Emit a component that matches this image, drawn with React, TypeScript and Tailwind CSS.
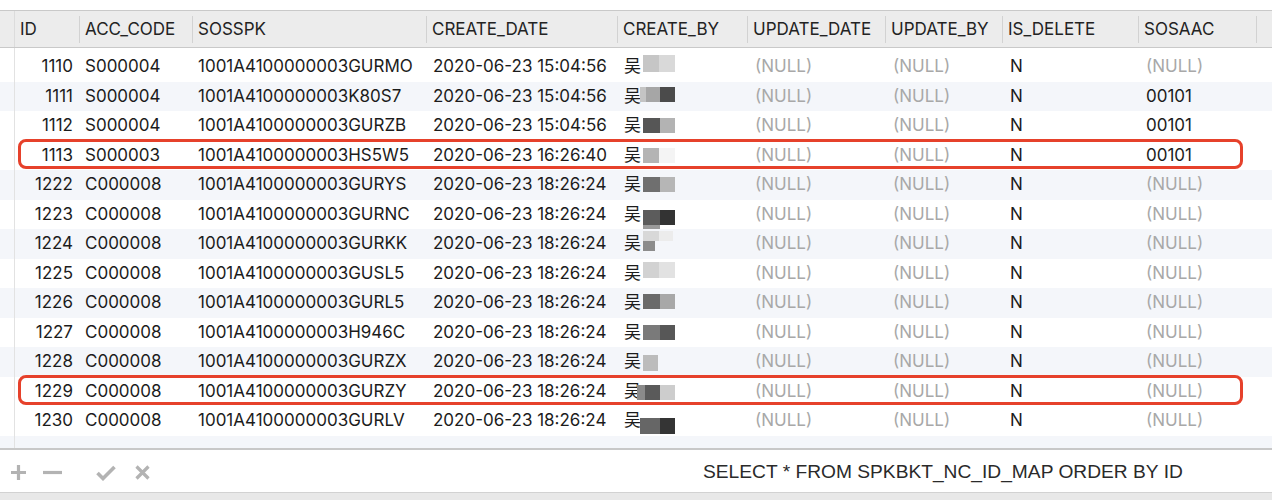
import React from "react";

type Block = { x: number; y: number; w: number; h: number; c: string };

interface Row {
  id: number;
  acc: string;
  pk: string;
  date: string;
  sosaac: string | null;
  shaded?: boolean;
  marked?: boolean;
  blur: Block[];
}

const COLS =
  "grid grid-cols-[15px_65px_113px_234px_191px_130px_138px_117px_136px_118px_1fr]";

const HEADERS = [
  "ID",
  "ACC_CODE",
  "SOSSPK",
  "CREATE_DATE",
  "CREATE_BY",
  "UPDATE_DATE",
  "UPDATE_BY",
  "IS_DELETE",
  "SOSAAC",
];

// redacted name pixels, positioned relative to the cell after 吴
const ROWS: Row[] = [
  { id: 1110, acc: "S000004", pk: "1001A4100000003GURMO", date: "2020-06-23 15:04:56", sosaac: null,
    blur: [{ x: 25, y: 3, w: 16, h: 17, c: "#c6c6c6" }, { x: 41, y: 3, w: 16, h: 17, c: "#d9d9d9" }] },
  { id: 1111, acc: "S000004", pk: "1001A4100000003K80S7", date: "2020-06-23 15:04:56", sosaac: "00101", shaded: true,
    blur: [{ x: 22, y: 5, w: 6, h: 15, c: "#c4c4c4" }, { x: 28, y: 5, w: 14, h: 15, c: "#a6a6a6" }, { x: 42, y: 5, w: 15, h: 15, c: "#4b4b4b" }] },
  { id: 1112, acc: "S000004", pk: "1001A4100000003GURZB", date: "2020-06-23 15:04:56", sosaac: "00101",
    blur: [{ x: 25, y: 7, w: 17, h: 15, c: "#565656" }, { x: 42, y: 7, w: 15, h: 15, c: "#b3b3b3" }] },
  { id: 1113, acc: "S000003", pk: "1001A4100000003HS5W5", date: "2020-06-23 16:26:40", sosaac: "00101", marked: true,
    blur: [{ x: 25, y: 7, w: 16, h: 15, c: "#b4b4b4" }, { x: 41, y: 7, w: 16, h: 15, c: "#f4f4f4" }] },
  { id: 1222, acc: "C000008", pk: "1001A4100000003GURYS", date: "2020-06-23 18:26:24", sosaac: null, shaded: true,
    blur: [{ x: 25, y: 7, w: 17, h: 15, c: "#6f6f6f" }, { x: 42, y: 7, w: 15, h: 15, c: "#b6b6b6" }] },
  { id: 1223, acc: "C000008", pk: "1001A4100000003GURNC", date: "2020-06-23 18:26:24", sosaac: null,
    blur: [{ x: 25, y: 10, w: 17, h: 15, c: "#5c5c5c" }, { x: 42, y: 10, w: 15, h: 15, c: "#333333" }, { x: 25, y: 25, w: 17, h: 4, c: "#9a9a9a" }] },
  { id: 1224, acc: "C000008", pk: "1001A4100000003GURKK", date: "2020-06-23 18:26:24", sosaac: null, shaded: true,
    blur: [{ x: 25, y: 2, w: 16, h: 10, c: "#d8d8d8" }, { x: 41, y: 2, w: 14, h: 10, c: "#ececec" }, { x: 25, y: 12, w: 12, h: 10, c: "#8c8c8c" }] },
  { id: 1225, acc: "C000008", pk: "1001A4100000003GUSL5", date: "2020-06-23 18:26:24", sosaac: null,
    blur: [{ x: 25, y: 3, w: 16, h: 16, c: "#d2d2d2" }, { x: 41, y: 3, w: 16, h: 16, c: "#e2e2e2" }] },
  { id: 1226, acc: "C000008", pk: "1001A4100000003GURL5", date: "2020-06-23 18:26:24", sosaac: null, shaded: true,
    blur: [{ x: 25, y: 6, w: 17, h: 15, c: "#6a6a6a" }, { x: 42, y: 6, w: 15, h: 15, c: "#a8a8a8" }] },
  { id: 1227, acc: "C000008", pk: "1001A4100000003H946C", date: "2020-06-23 18:26:24", sosaac: null,
    blur: [{ x: 25, y: 7, w: 17, h: 15, c: "#7a7a7a" }, { x: 42, y: 7, w: 15, h: 15, c: "#575757" }] },
  { id: 1228, acc: "C000008", pk: "1001A4100000003GURZX", date: "2020-06-23 18:26:24", sosaac: null, shaded: true,
    blur: [{ x: 25, y: 8, w: 15, h: 16, c: "#bcbcbc" }] },
  { id: 1229, acc: "C000008", pk: "1001A4100000003GURZY", date: "2020-06-23 18:26:24", sosaac: null, marked: true,
    blur: [{ x: 19, y: 8, w: 8, h: 15, c: "#8a8a8a" }, { x: 27, y: 8, w: 15, h: 15, c: "#5a5a5a" }, { x: 42, y: 8, w: 15, h: 15, c: "#cdcdcd" }] },
  { id: 1230, acc: "C000008", pk: "1001A4100000003GURLV", date: "2020-06-23 18:26:24", sosaac: null,
    blur: [{ x: 22, y: 12, w: 20, h: 16, c: "#666666" }, { x: 42, y: 12, w: 15, h: 16, c: "#343434" }] },
];

function Null() {
  return <span className="text-[#a8a8a8]">(NULL)</span>;
}

function TableRow({ row }: { row: Row }) {
  return (
    <div
      className={`${COLS} relative h-[29.5px] items-center text-[17px] text-[#1c1c1c] ${
        row.shaded ? "bg-[#f4f6fa]" : "bg-white"
      }`}
    >
      <div className="h-full border-r border-[#e2e2e2]" />
      <div className="pr-[7px] text-right">{row.id}</div>
      <div className="pl-[5px]">{row.acc}</div>
      <div className="pl-[5px]">{row.pk}</div>
      <div className="pl-[6px]">{row.date}</div>
      <div className="relative h-full pl-[6px] leading-[29.5px]">
        吴
        {row.blur.map((b, i) => (
          <span
            key={i}
            className="absolute"
            style={{ left: b.x, top: b.y, width: b.w, height: b.h, background: b.c }}
          />
        ))}
      </div>
      <div className="pl-[7px]">
        <Null />
      </div>
      <div className="pl-[7px]">
        <Null />
      </div>
      <div className="pl-[7px]">N</div>
      <div className="pl-[7px]">{row.sosaac ? row.sosaac : <Null />}</div>
      <div />
      {row.marked && (
        <div className="pointer-events-none absolute left-[18px] top-[-2px] h-[30px] w-[1225px] rounded-[8px] border-[3px] border-[#e6412b]" />
      )}
    </div>
  );
}

export default function App() {
  return (
    <div className="h-[500px] w-[1272px] overflow-hidden bg-white font-['Inter','Noto_Sans_CJK_SC',sans-serif]">
      <div className="h-[10px] bg-white" />

      {/* header */}
      <div
        className={`${COLS} h-[38px] items-center border-y border-[#c9c9c9] bg-[#ececec] text-[17px] text-[#232323]`}
      >
        <div className="h-full border-r border-[#dcdcdc]" />
        {HEADERS.map((h) => (
          <div key={h} className="flex h-[27px] items-center border-r border-[#d2d2d2] pl-[5px] pt-[1px]">
            {h}
          </div>
        ))}
        <div />
      </div>

      {/* body */}
      <div className="relative">
        <div className={`${COLS} h-[4px]`}>
          <div className="border-r border-[#e2e2e2]" />
        </div>
        {ROWS.map((r) => (
          <TableRow key={r.id} row={r} />
        ))}
        <div className={`${COLS} h-[12px] bg-[#f4f6fa]`}>
          <div className="border-r border-[#e2e2e2]" />
        </div>
      </div>

      {/* toolbar */}
      <div className="flex h-[44px] items-center border-t-2 border-[#c8c8c8] bg-white pt-[3px]">
        <div className="flex items-center pl-[10px] text-[#b3b3b3]">
          <svg width="17" height="17" viewBox="0 0 17 17">
            <path d="M8.5 1v15M1 8.5h15" stroke="currentColor" strokeWidth="3.2" />
          </svg>
          <svg width="19" height="17" viewBox="0 0 19 17" className="ml-[16px]">
            <path d="M0 8.5h19" stroke="currentColor" strokeWidth="3.2" />
          </svg>
          <svg width="20" height="17" viewBox="0 0 20 17" className="ml-[34px]">
            <path d="M1.5 9l5.5 5.5L18.5 3" stroke="currentColor" strokeWidth="3.6" fill="none" />
          </svg>
          <svg width="15" height="15" viewBox="0 0 15 15" className="ml-[19px]">
            <path d="M1.5 1.5l12 12M13.5 1.5l-12 12" stroke="currentColor" strokeWidth="3.2" />
          </svg>
        </div>
        <div className="ml-[553px] font-['Liberation_Sans',sans-serif] text-[19.2px] text-[#2a2a2a]">
          SELECT * FROM SPKBKT_NC_ID_MAP ORDER BY ID
        </div>
      </div>
      <div className="h-[10px] border-t border-[#d2d2d2] bg-[#e8e8e8]" />
    </div>
  );
}
